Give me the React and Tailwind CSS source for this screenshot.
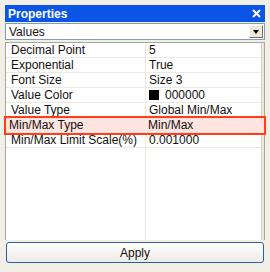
import React from 'react';

const rows = [
    { label: 'Decimal Point', value: '5' },
    { label: 'Exponential', value: 'True' },
    { label: 'Font Size', value: 'Size 3' },
    { label: 'Value Color', value: '000000', swatch: true },
    { label: 'Value Type', value: 'Global Min/Max' },
    { label: 'Min/Max Type', value: 'Min/Max', active: true },
    { label: 'Min/Max Limit Scale(%)', value: '0.001000' },
];

const App = () => {
    return (
        <div className="w-[270px] h-[272px] bg-[#f1efe6] flex flex-col pl-[5px] pr-[5px] pt-[5px] pb-[9px] text-[12px] text-[#111]" style={{ fontFamily: '"Liberation Sans", Arial, sans-serif' }}>
            {/* title bar */}
            <div className="h-[17px] bg-[#0b55e6] flex items-center justify-between pl-[3px] pr-[4px] shrink-0">
                <span className="text-white font-bold text-[12px] leading-none mt-[1px]">Properties</span>
                <svg width="9" height="9" viewBox="0 0 9 9">
                    <path d="M1 1 L8 8 M8 1 L1 8" stroke="white" strokeWidth="2" />
                </svg>
            </div>

            {/* combo */}
            <div className="h-[17px] mt-[1px] bg-white border border-[#7f9db9] flex items-center justify-between shrink-0">
                <span className="pl-[3px] leading-none">Values</span>
                <div className="w-[14px] h-[13px] mr-[1px] bg-[#ece9d8] border border-t-white border-l-white border-r-[#716f64] border-b-[#716f64] flex items-center justify-center">
                    <div className="w-0 h-0 border-l-[3px] border-r-[3px] border-t-[4px] border-l-transparent border-r-transparent border-t-black" />
                </div>
            </div>

            {/* grid */}
            <div className="mt-[2px] flex-1 flex bg-white border-l border-t border-[#a9a79c]">
                <div className="flex-1 relative flex flex-col">
                    {rows.map((r) => (
                        <div
                            key={r.label}
                            className={
                                r.active
                                    ? 'h-[19px] -my-[2px] -ml-[2px] -mr-[5px] flex border-2 border-[#ff3d1a] bg-[#ffe4e0] relative z-10'
                                    : 'h-[15px] flex border-b border-[#ece9e0]'
                            }
                        >
                            <div className={r.active ? 'w-[139px] pl-[3px] overflow-hidden whitespace-nowrap leading-[15px] border-r border-[#ece9e0]' : 'w-[140px] pl-[5px] overflow-hidden whitespace-nowrap leading-[14px] border-r border-[#ece9e0]'}>
                                {r.label}
                            </div>
                            <div className={r.active ? 'flex-1 pl-[3px] flex items-center gap-[3px] leading-[15px]' : 'flex-1 pl-[3px] flex items-center gap-[3px] leading-[14px]'}>
                                {r.swatch && <span className="w-[10px] h-[10px] bg-black inline-block" />}
                                <span className={r.swatch ? 'ml-[3px]' : ''}>{r.value}</span>
                            </div>
                        </div>
                    ))}
                    <div className="flex-1 flex">
                        <div className="w-[140px] border-r border-[#ece9e0]" />
                    </div>
                </div>
                <div className="w-[4px] bg-[#ece9d8] border-l border-[#d4d0c8] border-r border-r-[#a9a79c]" />
            </div>

            {/* apply */}
            <button className="mt-[2px] h-[21px] mx-[1px] shrink-0 rounded-[3px] border border-[#2d5ea8] bg-gradient-to-b from-white to-[#ecebe6] text-[12px] leading-none">
                Apply
            </button>
        </div>
    );
};

export default App;
